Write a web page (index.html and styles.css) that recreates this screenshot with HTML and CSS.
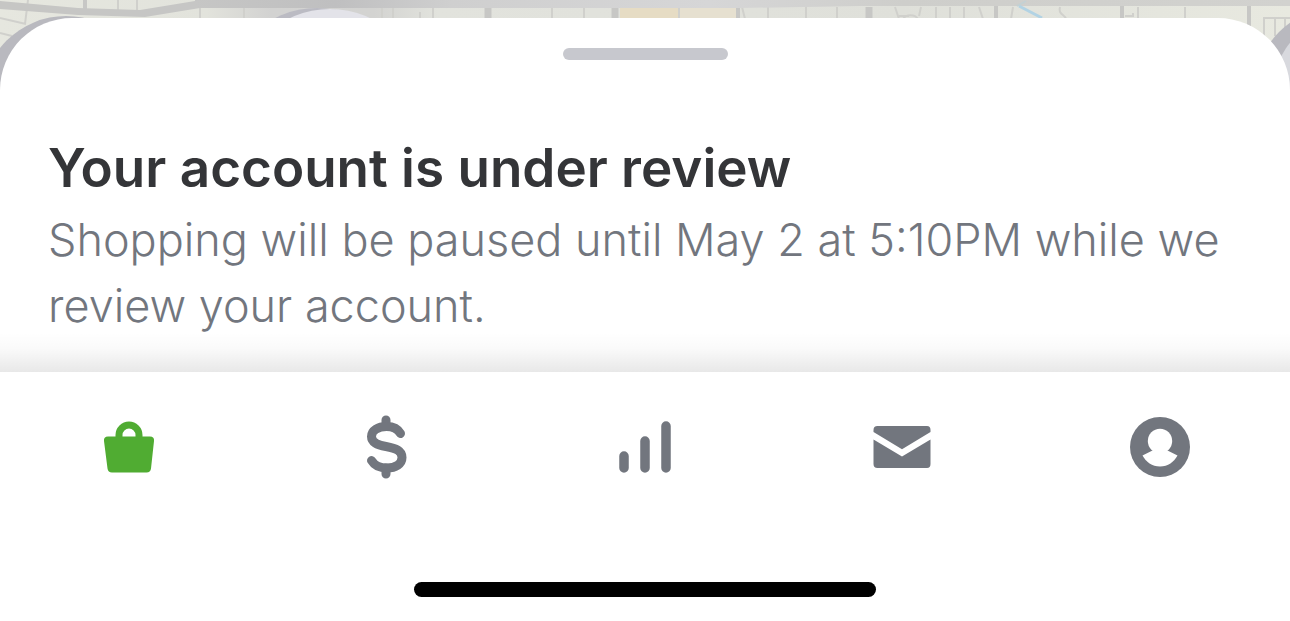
FILE: index.html
```html
<!DOCTYPE html>
<html lang="en">
<head>
  <meta charset="utf-8">
  <meta name="viewport" content="width=device-width, initial-scale=1">
  <title>Your account is under review</title>
  <link rel="stylesheet" href="styles.css">
</head>
<body>
  <div class="screen">
    <svg class="map" viewBox="0 0 1290 90" preserveAspectRatio="xMidYMin slice" aria-hidden="true">
      <defs>
        <linearGradient id="avenue" gradientUnits="userSpaceOnUse" x1="0" x2="1290" y1="0" y2="0">
          <stop offset="0" stop-color="#c6c6c4"/>
          <stop offset="0.15" stop-color="#c6c6c5"/>
          <stop offset="0.26" stop-color="#bfbfc0"/>
          <stop offset="0.35" stop-color="#cfcfcf"/>
          <stop offset="0.55" stop-color="#d6d6d7"/>
          <stop offset="0.7" stop-color="#cececb"/>
          <stop offset="1" stop-color="#d2d2cf"/>
        </linearGradient>
        <linearGradient id="land" x1="0" x2="1" y1="0" y2="0">
          <stop offset="0" stop-color="#e6e7df"/>
          <stop offset="0.16" stop-color="#e2e3dc"/>
          <stop offset="0.21" stop-color="#d2d2d1"/>
          <stop offset="0.29" stop-color="#d3d3d1"/>
          <stop offset="0.34" stop-color="#e2e3dd"/>
          <stop offset="0.7" stop-color="#dfe0da"/>
          <stop offset="1" stop-color="#e8e9e0"/>
        </linearGradient>
      </defs>
      <rect width="1290" height="90" fill="url(#land)"/>
      <rect x="620" y="7" width="59" height="14" fill="#e6dcc4"/>
      <rect x="680" y="7" width="56" height="14" fill="#e6e0d0"/>
      <g fill="none" stroke="#d0d0cc" stroke-width="2">
        <path d="M28 0 25 24M0 18 26 24M0 33 12 36M118 0v10M137 0v10M200 7v12M244 7v12M382 7v12M393 7v12M420 12v8M433 7v12M552 7v12M584 7v12M679 7v12M742 7l3 12M768 7v12M806 7v12M837 7v12"/>
        <path d="M895 7l4 12M899 16h10M921 7l-2 9M903 19c3-5 12-5 15 0M936 7v12M950 7v12M964 7v12M979 7l4 12M1013 7l-2 12M1060 7c-2 8 5 7 6 12M1125 16h8v-3M1138 7v12M1185 7v12M1264 37V18h26M1275 18v18M1285 18v10"/>
      </g>
      <g fill="none" stroke="#c7c7c5">
        <path d="M85 0v14" stroke-width="4"/>
        <path d="M488 7v12M615 7v12M869 7v12" stroke-width="7"/>
        <path d="M738 7v12M996 5v14M1122 5v14M1249 5v23" stroke-width="4"/>
      </g>
      <path d="M0 1 78 8 140 10 195 1V0H1290V6H860L740 8H200L145 17 78 15 0 9z" fill="url(#avenue)"/>
      <path d="M1019 6 1042 18" stroke="#b2d3e4" stroke-width="3"/>
      <path d="M1017 6 1026 1" stroke="#c3d1d4" stroke-width="2"/>
      <circle cx="66" cy="100" r="84" fill="#b9b9bf"/>
      <circle cx="317" cy="102" r="94" fill="#bbbbc3"/>
      <circle cx="330" cy="102" r="93" fill="#e3e3e9"/>
      <circle cx="1337" cy="90" r="82" fill="#b9b9bf"/>
      <circle cx="1354" cy="94" r="82" fill="#d8d9de"/>
    </svg>

    <main class="sheet">
      <button class="handle" type="button" aria-label="Resize panel"></button>
      <section class="notice">
        <h1 class="notice-title">Your account is under review</h1>
        <p class="notice-text">Shopping will be paused until May 2 at 5:10PM while we review your account.</p>
      </section>
      <div class="shade"></div>
      <nav class="tabs" aria-label="Main">
        <button class="tab tab-active" type="button" aria-label="Shop" aria-current="page">
          <svg class="icon" viewBox="0 0 72 72" aria-hidden="true">
            <path d="M26 27v-3a10 10 0 0 1 20 0v3" fill="none" stroke="currentColor" stroke-width="7"/>
            <path d="M15 25.500H57Q61.500 25.500 61 30L58 57.500Q57.500 61.500 53.500 61.500H19Q15 61.500 14.500 57.500L11 30Q10.500 25.500 15 25.500Z" fill="currentColor"/>
          </svg>
        </button>
        <button class="tab" type="button" aria-label="Earnings">
          <svg class="icon" viewBox="0 0 72 72" aria-hidden="true">
            <path d="M35 9v6M35 57v6" fill="none" stroke="currentColor" stroke-width="9" stroke-linecap="round"/>
            <path d="M49.500 22.500C47 18 42 15.500 35.500 15.500C27 15.500 20.500 19.500 20.500 25.500C20.500 31.500 26 33.800 35 35.500C45 37.400 51 39.500 51 46.500C51 53 44.500 57 36 57C29 57 23.500 54.500 20.500 49.500" fill="none" stroke="currentColor" stroke-width="9" stroke-linecap="round"/>
          </svg>
        </button>
        <button class="tab" type="button" aria-label="Statistics">
          <svg class="icon" viewBox="0 0 72 72" aria-hidden="true">
            <path d="M15 45v12M36 30v27M57 15v42" fill="none" stroke="currentColor" stroke-width="9.500" stroke-linecap="round"/>
          </svg>
        </button>
        <button class="tab" type="button" aria-label="Messages">
          <svg class="icon" viewBox="0 0 72 72" aria-hidden="true">
            <path d="M10.500 15H60Q63.500 15 63.500 19V21L35 38.200 6.500 21V19Q6.500 15 10.500 15ZM6.500 28.500 35 45.500 63.500 28.500V53Q63.500 57 60 57H10.500Q6.500 57 6.500 53Z" fill="currentColor"/>
          </svg>
        </button>
        <button class="tab" type="button" aria-label="Profile">
          <svg class="icon" viewBox="0 0 72 72" aria-hidden="true">
            <circle cx="35" cy="36" r="30" fill="currentColor"/>
            <circle cx="35" cy="30" r="12.200" fill="#fff"/>
            <path d="M27.500 39.500H42.500L52.500 44.500C49 51 43 55.500 35 55.500C27 55.500 21 51 17.500 44.500Z" fill="#fff"/>
          </svg>
        </button>
      </nav>
      <div class="home-bar"></div>
    </main>
  </div>
</body>
</html>
```

FILE: styles.css
```css
* {
  box-sizing: border-box;
}

body {
  margin: 0;
  background: #fff;
  font-family: Inter, "Liberation Sans", sans-serif;
}

.screen {
  display: grid;
  min-height: 100vh;
}

.map,
.sheet {
  grid-area: 1 / 1;
}

.map {
  width: 100%;
  height: 90px;
}

.sheet {
  z-index: 1;
  display: flex;
  flex-direction: column;
  margin-top: 18px;
  padding-bottom: 24px;
  background: #fff;
  border-radius: 72px 72px 0 0;
}

.handle {
  align-self: center;
  width: 165px;
  height: 12px;
  margin-top: 30px;
  padding: 0;
  border: 0;
  border-radius: 6px;
  background: #c7c8ce;
}

.notice {
  padding: 75px 48px 0;
}

.notice-title {
  margin: 0;
  color: #343538;
  font-size: 53px;
  font-weight: 600;
  line-height: 66px;
}

.notice-text {
  margin: 6px 0 0;
  color: #72767e;
  font-size: 45px;
  font-weight: 300;
  line-height: 66px;
}

.shade {
  height: 40px;
  margin-top: -7px;
  background: linear-gradient(rgba(0, 0, 0, 0), rgba(0, 0, 0, 0.02) 40%, rgba(0, 0, 0, 0.09));
}

.tabs {
  display: grid;
  grid-template-columns: repeat(5, 1fr);
}

.tab {
  display: flex;
  align-items: center;
  justify-content: center;
  height: 150px;
  padding: 0;
  border: 0;
  background: none;
  color: #72767e;
}

.tab-active {
  color: #50ac32;
}

.icon {
  width: 72px;
  height: 72px;
}

.home-bar {
  align-self: center;
  width: 462px;
  max-width: 60%;
  height: 15px;
  margin-top: auto;
  border-radius: 8px;
  background: #000;
}
```
